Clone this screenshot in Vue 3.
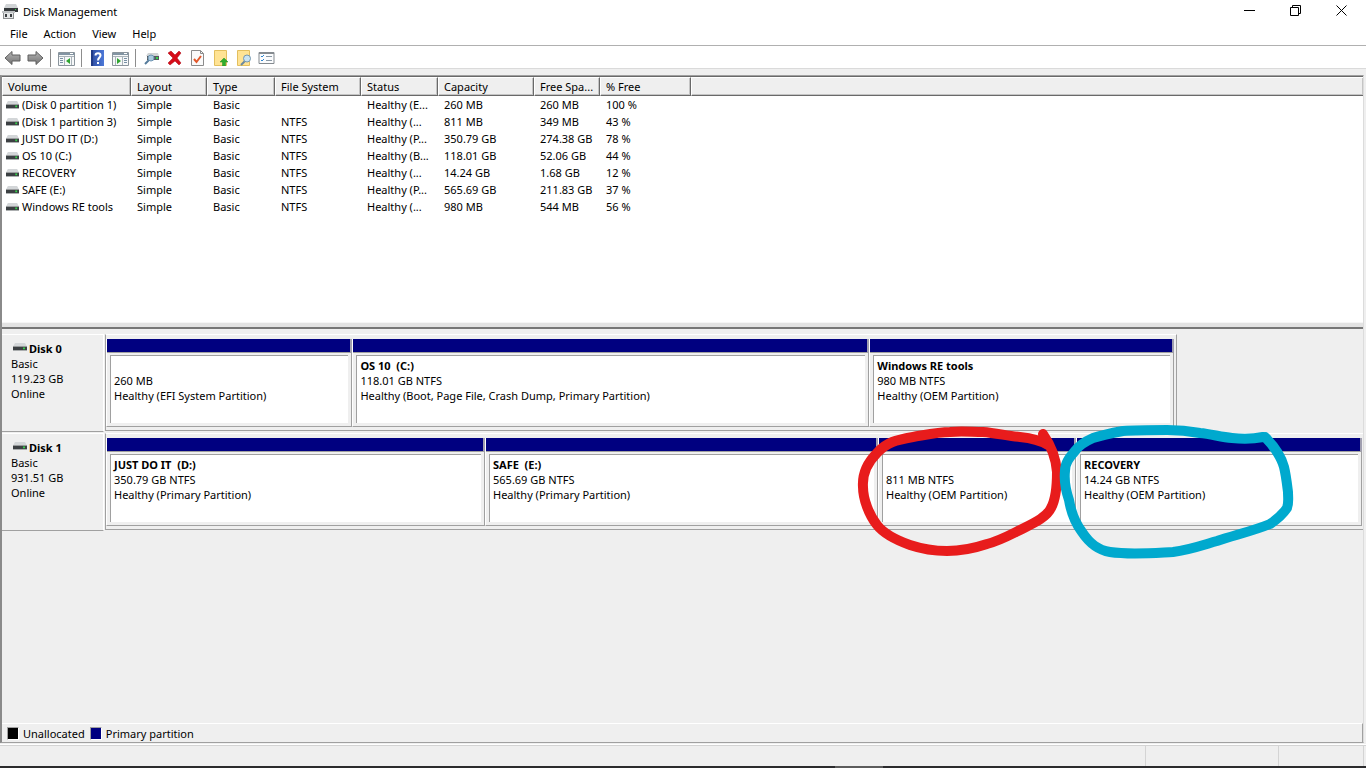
<script setup>
const menus = ['File', 'Action', 'View', 'Help']
const columns = [
  { name: 'Volume', width: 129 },
  { name: 'Layout', width: 76 },
  { name: 'Type', width: 68 },
  { name: 'File System', width: 86 },
  { name: 'Status', width: 77 },
  { name: 'Capacity', width: 96 },
  { name: 'Free Spa...', width: 66 },
  { name: '% Free', width: 91 }
]
const volumes = [
  ['(Disk 0 partition 1)', 'Simple', 'Basic', '', 'Healthy (E...', '260 MB', '260 MB', '100 %'],
  ['(Disk 1 partition 3)', 'Simple', 'Basic', 'NTFS', 'Healthy (...', '811 MB', '349 MB', '43 %'],
  ['JUST DO IT (D:)', 'Simple', 'Basic', 'NTFS', 'Healthy (P...', '350.79 GB', '274.38 GB', '78 %'],
  ['OS 10 (C:)', 'Simple', 'Basic', 'NTFS', 'Healthy (B...', '118.01 GB', '52.06 GB', '44 %'],
  ['RECOVERY', 'Simple', 'Basic', 'NTFS', 'Healthy (...', '14.24 GB', '1.68 GB', '12 %'],
  ['SAFE (E:)', 'Simple', 'Basic', 'NTFS', 'Healthy (P...', '565.69 GB', '211.83 GB', '37 %'],
  ['Windows RE tools', 'Simple', 'Basic', 'NTFS', 'Healthy (...', '980 MB', '544 MB', '56 %']
]
const disks = [
  {
    name: 'Disk 0', size: '119.23 GB', span: '85.2%', grid: '246fr 516fr 304fr',
    parts: [
      { title: '', size: '260 MB', status: 'Healthy (EFI System Partition)' },
      { title: 'OS 10  (C:)', size: '118.01 GB NTFS', status: 'Healthy (Boot, Page File, Crash Dump, Primary Partition)' },
      { title: 'Windows RE tools', size: '980 MB NTFS', status: 'Healthy (OEM Partition)' }
    ]
  },
  {
    name: 'Disk 1', size: '931.51 GB', span: '100%', grid: '379fr 393fr 198fr 286fr',
    parts: [
      { title: 'JUST DO IT  (D:)', size: '350.79 GB NTFS', status: 'Healthy (Primary Partition)' },
      { title: 'SAFE  (E:)', size: '565.69 GB NTFS', status: 'Healthy (Primary Partition)' },
      { title: '', size: '811 MB NTFS', status: 'Healthy (OEM Partition)' },
      { title: 'RECOVERY', size: '14.24 GB NTFS', status: 'Healthy (OEM Partition)' }
    ]
  }
]
</script>

<template>
  <div class="window">
    <svg class="defs" width="0" height="0" aria-hidden="true">
      <defs>
        <linearGradient id="arrowFill" x1="0" y1="0" x2="0" y2="1">
          <stop offset="0" stop-color="#b4b4b4" /><stop offset="1" stop-color="#737373" />
        </linearGradient>
        <linearGradient id="helpFill" x1="0" y1="0" x2="1" y2="0">
          <stop offset="0" stop-color="#2c4a9e" /><stop offset="1" stop-color="#4c78d8" />
        </linearGradient>
        <symbol id="drive" viewBox="0 0 14 9" preserveAspectRatio="none">
          <path d="M2 0h10l2 4H0z" fill="#d3d6d8" />
          <path d="M0 4h14v4H0z" fill="#3c4043" />
          <path d="M0 8h14v1H0z" fill="#a4a7a9" />
          <path d="M10 5h2v2h-2z" fill="#35d24a" />
        </symbol>
      </defs>
    </svg>

    <header class="titlebar">
      <svg class="app-icon" viewBox="0 0 16 16">
        <path d="M4 0h10l2 4H2z" fill="#d0d3d5" />
        <path d="M2 4h14v4H2z" fill="#34383b" />
        <path d="M13 5h1v1h-1z" fill="#35d24a" />
        <path d="M1 8h11v7H1z" fill="#8d8f91" />
        <path d="M0 7h13v2H0z" fill="#bfc2c4" />
        <path d="M2 9h9v5H2z" fill="#e4e6e7" />
        <path d="M3 10h2v3H3zM8 10h2v3H8z" fill="#3a3d40" />
      </svg>
      <h1>Disk Management</h1>
      <div class="caption">
        <button aria-label="Minimize"><svg viewBox="0 0 11 11"><path d="M0 5.5h11" /></svg></button>
        <button aria-label="Restore"><svg viewBox="0 0 11 11"><path d="M.5 2.500h8v8h-8zM2.500 2.500v-2h8v8h-2" /></svg></button>
        <button aria-label="Close"><svg viewBox="0 0 11 11"><path d="M.5.5l10 10M10.500.5l-10 10" /></svg></button>
      </div>
    </header>

    <nav class="menubar">
      <button v-for="m in menus" :key="m">{{ m }}</button>
    </nav>

    <div class="toolbar">
      <button aria-label="Back"><svg viewBox="0 0 17 16"><path d="M1 8l7-6.500v3.500h8v6H8v3.500z" fill="url(#arrowFill)" stroke="#5f5f5f" /></svg></button>
      <button aria-label="Forward"><svg viewBox="0 0 17 16"><path d="M16 8L9 1.500v3.500H1v6h8v3.500z" fill="url(#arrowFill)" stroke="#5f5f5f" /></svg></button>
      <i class="sep"></i>
      <button aria-label="Show or hide console tree">
        <svg viewBox="0 0 17 16">
          <path d="M.5 2.500h16v13H.5z" fill="#f6f8f9" stroke="#8a949c" /><path d="M1 3h15v2H1z" fill="#8395a3" />
          <path d="M12 3.500h3" stroke="#fff" /><path d="M1 6.500h15M6.500 7v8M13.500 7v8" stroke="#aab3ba" />
          <path d="M2 8.500h3M2 10.500h3M2 12.500h3" stroke="#7890a5" /><path d="M12 8v6l-4-3z" fill="#2fa52f" />
        </svg>
      </button>
      <i class="sep"></i>
      <button aria-label="Help">
        <svg viewBox="0 0 17 16">
          <path d="M2 0h13v16H2z" fill="url(#helpFill)" /><path d="M2 0h2v16H2z" fill="#203a86" />
          <path d="M6.500 5.500c0-3 5-3 5 0 0 2-2.500 2-2.500 5" fill="none" stroke="#fff" stroke-width="2" /><path d="M8 12h2v2H8z" fill="#fff" />
        </svg>
      </button>
      <button aria-label="Show or hide action pane">
        <svg viewBox="0 0 17 16">
          <path d="M.5 2.500h16v13H.5z" fill="#f6f8f9" stroke="#8a949c" /><path d="M1 3h15v2H1z" fill="#8395a3" />
          <path d="M12 3.500h3" stroke="#fff" /><path d="M1 6.500h15M3.500 7v8M10.500 7v8" stroke="#aab3ba" />
          <path d="M12 8.500h3M12 10.500h3M12 12.500h3" stroke="#7890a5" /><path d="M5 8v6l4-3z" fill="#2fa52f" />
        </svg>
      </button>
      <i class="sep"></i>
      <button aria-label="Rescan disks">
        <svg viewBox="0 0 17 16">
          <path d="M5 3h10l1 3H3z" fill="#d0d3d5" /><path d="M4 6h12v4H4z" fill="#54595d" /><path d="M13 7h2v2h-2z" fill="#35d24a" />
          <path d="M6 10l-4 4" stroke="#557b9b" stroke-width="2" /><circle cx="8" cy="8" r="3" fill="#a9c9df" stroke="#6d94b2" />
        </svg>
      </button>
      <button aria-label="Delete"><svg viewBox="0 0 17 16"><path d="M2 3l3-2 4 4 4-4 2 2-4 5 4 5-2 2-4-4-5 4-2-2 5-5z" fill="#d60c18" stroke="#a8000c" stroke-width=".5" /></svg></button>
      <button aria-label="Properties">
        <svg viewBox="0 0 17 16"><path d="M2.500.5h9l3 3v12h-12z" fill="#fafafa" stroke="#8b8b8b" /><path d="M11.500.5v3h3" fill="none" stroke="#8b8b8b" /><path d="M5 9l2.500 3L12 6" fill="none" stroke="#e2582b" stroke-width="2" /></svg>
      </button>
      <button aria-label="Open parent">
        <svg viewBox="0 0 17 16"><path d="M2.500.5h12v15h-12z" fill="#ffe394" stroke="#e3bf5e" /><path d="M12 8l4 4h-2.500v4h-3v-4H8z" fill="#2fae2c" stroke="#208c20" stroke-width=".5" /></svg>
      </button>
      <button aria-label="Explore">
        <svg viewBox="0 0 17 16"><path d="M2.500.5h12v15h-12z" fill="#ffe394" stroke="#e3bf5e" /><path d="M10 11l-4 4" stroke="#69889f" stroke-width="2" /><circle cx="12" cy="8.500" r="3.500" fill="#c9e3f3" stroke="#7597ae" /></svg>
      </button>
      <button aria-label="View options">
        <svg viewBox="0 0 17 16"><path d="M1 2.500h15v11H1z" fill="#fbfcfd" stroke="#858b90" /><path d="M1 3h15" stroke="#858b90" stroke-width="2" /><path d="M3 6l1 1 2-2M3 10l1 1 2-2" fill="none" stroke="#2f86d0" /><path d="M8 6.500h6M8 10.500h6" stroke="#8a98a5" /></svg>
      </button>
    </div>

    <main class="panes">
      <section class="list">
        <table>
          <colgroup>
            <col v-for="c in columns" :key="c.name" :style="{ width: c.width + 'px' }" />
            <col />
          </colgroup>
          <thead>
            <tr><th v-for="c in columns" :key="c.name">{{ c.name }}</th><th></th></tr>
          </thead>
          <tbody>
            <tr v-for="v in volumes" :key="v[0]">
              <td v-for="(cell, i) in v" :key="i"><svg v-if="i === 0" class="drive"><use href="#drive" /></svg>{{ cell }}</td>
              <td></td>
            </tr>
          </tbody>
        </table>
      </section>
      <div class="splitter"></div>
      <section class="disks">
        <article v-for="d in disks" :key="d.name" class="disk">
          <div class="label">
            <h2><svg class="drive"><use href="#drive" /></svg>{{ d.name }}</h2>
            <p>Basic</p><p>{{ d.size }}</p><p>Online</p>
          </div>
          <div class="track">
            <div class="parts" :style="{ width: d.span, gridTemplateColumns: d.grid }">
              <div v-for="(p, i) in d.parts" :key="i" class="part">
                <div class="bar"></div>
                <div class="body">
                  <div class="box"><h3>{{ p.title }}</h3><p>{{ p.size }}</p><p>{{ p.status }}</p></div>
                </div>
              </div>
            </div>
          </div>
        </article>
      </section>
      <footer class="legend">
        <i class="swatch black"></i><span>Unallocated</span>
        <i class="swatch navy"></i><span>Primary partition</span>
      </footer>
    </main>

    <div class="status"><i></i><i></i><i></i></div>
    <div class="taskbar"><i></i></div>

    <svg class="ink" aria-hidden="true">
      <path stroke="#e81c1c" d="M1043 434C1050 444 1056 458 1057 472C1057 485 1056 499 1051 508C1047 517 1034 523 1020 530C1010 535 999 541 987 544C972 549 960 551 947 551C932 551 922 549 910 545C896 540 884 534 877 525C869 515 863 499 863 487C862 473 868 462 877 453C887 442 896 440 913 437C925 435 938 432 950 432C961 431 972 432 983 432C996 433 1008 436 1020 437C1030 438 1040 440 1048 445" />
      <path stroke="#00a9ce" d="M1263 437C1253 439 1242 439 1232 438C1221 437 1211 434 1200 433C1189 431 1178 430 1167 430C1152 430 1137 430 1123 431C1112 433 1102 435 1093 438C1084 442 1079 445 1075 451C1069 458 1065 463 1065 471C1064 480 1066 491 1069 500C1071 512 1076 524 1082 532C1090 544 1098 550 1110 552C1130 555 1153 553 1173 552C1189 550 1203 545 1217 541C1235 535 1253 531 1270 524C1276 520 1283 514 1287 508C1289 503 1288 498 1288 492C1287 484 1286 475 1284 467C1282 459 1275 447 1265 437" />
    </svg>
  </div>
</template>

<style>
body { margin: 0; }
</style>

<style scoped>
.window {
  position: relative;
  display: flex;
  flex-direction: column;
  min-height: 100vh;
  background: #efefef;
  color: #000;
  font: 11px/15px "Noto Sans", "Open Sans", sans-serif;
}
h1, h2, h3, p { margin: 0; font-size: inherit; }
button { margin: 0; border: 0; background: none; font: inherit; color: inherit; }
.defs { position: absolute; }
.titlebar { display: flex; align-items: center; height: 23px; padding-left: 2px; background: #fff; }
.app-icon { width: 16px; height: 16px; }
.titlebar h1 { margin-left: 5px; font-weight: 400; }
.caption { display: flex; margin-left: auto; padding-right: 2px; }
.caption button { width: 46px; height: 23px; padding: 0; display: grid; place-items: center; }
.caption svg { width: 11px; height: 11px; margin-bottom: 2px; fill: none; stroke: #000; }
.menubar { display: flex; align-items: flex-start; gap: 16px; height: 19px; padding: 3px 0 0 10px; background: #fff; border-bottom: 1px solid #b0b0b0; }
.menubar button { padding: 0; }
.toolbar { display: flex; align-items: flex-end; height: 22px; padding: 0 1px; background: #fff; border-bottom: 1px solid #dadada; }
.toolbar button { width: 23px; height: 20px; padding: 0; display: grid; place-items: center; }
.toolbar svg { width: 17px; height: 16px; }
.sep { width: 1px; height: 18px; margin: 0 4px 1px 3px; background: #8d8d8d; }
.panes { flex: 1; display: flex; flex-direction: column; margin: 6px 2px 0 0; border: 1px solid #a0a0a0; border-right-color: #dcdcdc; border-left: 2px solid #8a8a8a; }
.list { min-height: 244px; background: #fff; border-top: 1px solid #696969; }
table { width: 100%; table-layout: fixed; border-collapse: separate; border-spacing: 0; }
th, td { box-sizing: border-box; padding: 0 0 0 6px; text-align: left; white-space: nowrap; font-weight: 400; }
th { height: 19px; background: #efefef; border: 1px solid #fff; border-right-color: #696969; border-bottom: 1px solid #696969; padding-left: 5px; box-shadow: inset -1px -1px #c4c4c4; }
th:last-child { border-right: 0; }
td { height: 17px; }
td:first-child { padding-left: 4px; }
.drive { width: 13px; height: 8px; }
td .drive { margin-right: 3px; vertical-align: 0; }
.splitter { height: 5px; border-top: 1px solid #fff; border-bottom: 2px solid #777; background: #e3e3e3; box-shadow: inset 0 1px #f6f6f6; }
.disks { flex: 1; padding-top: 5px; }
.disk { display: flex; align-items: flex-start; height: 99px; }
.label { box-sizing: border-box; width: 102px; height: 98px; padding: 6px 0 0 9px; border-top: 1px solid #fff; border-right: 1px solid #fff; border-bottom: 1px solid #a0a0a0; background: #efefef; }
.label h2 { display: flex; align-items: center; font-weight: 700; }
.label h2 .drive { width: 14px; margin: 0 2px 4px; }
.track { flex: 1; display: flex; align-items: flex-start; padding-left: 1px; }
.parts { box-sizing: border-box; display: grid; height: 97px; padding: 4px 2px 3px 0; border: 1px solid #a0a0a0; border-top-color: #fff; }
.disk:last-child .parts { border-right: 0; padding-right: 1px; }
.part { display: flex; flex-direction: column; min-width: 0; border-left: 1px solid #fff; border-bottom: 1px solid #a0a0a0; }
.bar { height: 13px; background: #000080; border-right: 2px solid #a09fb0; border-bottom: 1px solid #a0a0a0; }
.body { flex: 1; display: flex; padding: 2px 3px 3px; border-right: 1px solid #a0a0a0; }
.box { flex: 1; min-width: 0; padding: 2px 0 0 3px; border-left: 1px solid #a0a0a0; border-top: 1px solid #a0a0a0; background: #fff; white-space: pre; }
.box h3 { min-height: 15px; font-weight: 700; }
.legend { display: flex; align-items: center; height: 18px; padding-left: 5px; border-top: 1px solid #fff; border-right: 1px solid #a0a0a0; }
.swatch { width: 10px; height: 11px; border: 1px solid #fff; border-top-color: #a0a0a0; border-left-color: #a0a0a0; }
.black { background: #000; }
.navy { background: #000080; }
.legend span { margin: 0 5px 0 4px; }
.status { display: flex; justify-content: flex-end; height: 20px; margin-top: 2px; border-top: 1px solid #d4d4d4; box-shadow: 0 -1px #fff; padding-right: 2px; }
.status i { box-sizing: border-box; width: 133px; border-right: 1px solid #d4d4d4; }
.status i:last-child { width: 85px; }
.taskbar { display: flex; height: 2px; background: #2b2b2d; }
.taskbar i { width: 48px; margin-left: 61.1%; background: #5c5c5c; }
.ink { position: absolute; inset: 0; width: 100%; height: 100%; pointer-events: none; fill: none; stroke-width: 10px; stroke-linecap: round; stroke-linejoin: round; }
</style>
